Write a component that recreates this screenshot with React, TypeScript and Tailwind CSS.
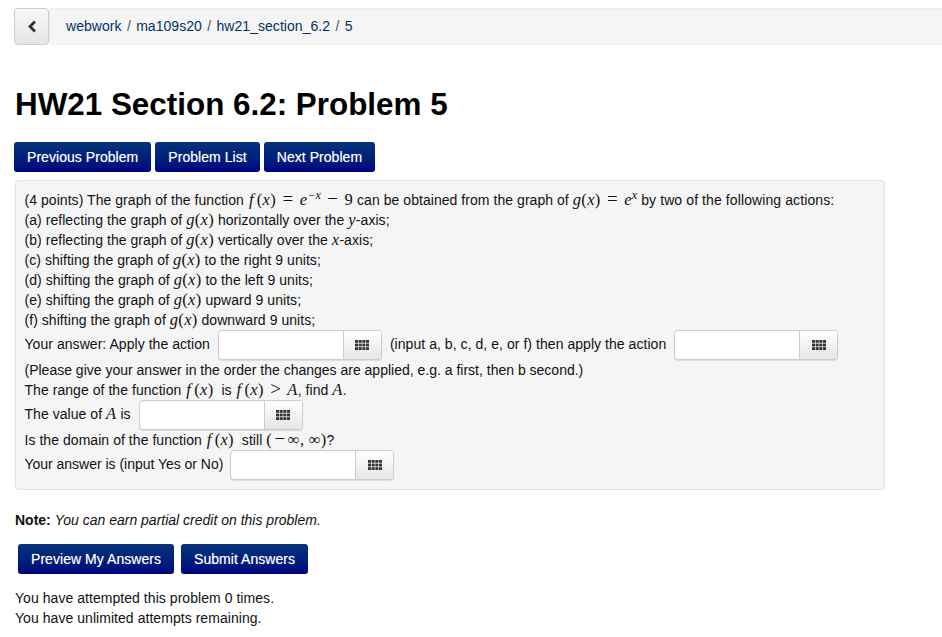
import { ReactNode } from "react";

const sans = "font-['Liberation_Sans',Arial,sans-serif]";

function I({ children }: { children: ReactNode }) {
  return <span className="font-['Liberation_Serif',serif] italic text-[16.5px] tracking-[0.3px]">{children}</span>;
}

function R({ children }: { children: ReactNode }) {
  return <span className="font-['Liberation_Serif',serif] text-[16.5px] tracking-[0.3px]">{children}</span>;
}

// operators come out wider in the math font
function Op({ children }: { children: ReactNode }) {
  return <span className="mx-[2.5px] font-['Liberation_Serif',serif] text-[19px] leading-[0]">{children}</span>;
}

function Fx({ n = "f", tight = false }: { n?: string; tight?: boolean }) {
  return (
    <span className={n === "f" && !tight ? "mr-[4px] whitespace-nowrap" : "whitespace-nowrap"}>
      <span className={n === "f" ? "pl-[1px] pr-[3px]" : ""}>
        <I>{n}</I>
      </span>
      <R>(</R>
      <I>x</I>
      <R>)</R>
    </span>
  );
}

function Sup({ children }: { children: ReactNode }) {
  return <sup className="relative top-[-6px] align-baseline font-['Liberation_Serif',serif] text-[12px] italic leading-[0]">{children}</sup>;
}

function GridIcon() {
  return (
    <svg width="14" height="10" viewBox="0 0 14 10" fill="#333">
      {[0, 1, 2].map((r) =>
        [0, 1, 2, 3].map((c) => <rect key={`${r}-${c}`} x={c * 3.67} y={r * 3.6} width="3" height="2.8" />)
      )}
    </svg>
  );
}

function AnswerBox() {
  return (
    <span className="inline-flex h-[30px] w-[164px] shrink-0 rounded-[4px] border border-[#cccccc] bg-white shadow-[0_1px_1px_rgba(0,0,0,0.1)]">
      <span className="flex-1" />
      <span className="flex w-[38px] items-center justify-center rounded-r-[3px] border-l border-[#cccccc] bg-gradient-to-b from-white to-[#e6e6e6]">
        <GridIcon />
      </span>
    </span>
  );
}

function NavButton({ children }: { children: ReactNode }) {
  return (
    <button className="h-[30px] rounded-[3px] bg-gradient-to-b from-[#0a3278] to-[#00007f] px-[13px] text-[14px] text-white [text-shadow:0_0_1px_rgba(255,255,255,0.45)]">
      {children}
    </button>
  );
}

export default function App() {
  const actions = [
    <>(a) reflecting the graph of <Fx n="g" /> horizontally over the <I>y</I>-axis;</>,
    <>(b) reflecting the graph of <Fx n="g" /> vertically over the <I>x</I>-axis;</>,
    <>(c) shifting the graph of <Fx n="g" /> to the right 9 units;</>,
    <>(d) shifting the graph of <Fx n="g" /> to the left 9 units;</>,
    <>(e) shifting the graph of <Fx n="g" /> upward 9 units;</>,
    <>(f) shifting the graph of <Fx n="g" /> downward 9 units;</>,
  ];

  return (
    <div className={`${sans} h-[637px] w-[942px] overflow-hidden bg-white pl-[14px] pt-[8px] text-[14px] leading-[20px] tracking-[0.05px] text-[#111111]`}>
      <div className="flex h-[37px]">
        <button className="flex h-[37px] w-[35px] items-center justify-center rounded-[4px] border border-[#cccccc] bg-gradient-to-b from-[#f8f8f8] to-[#e6e6e6]">
          <svg width="10" height="13" viewBox="0 0 10 13" fill="none" stroke="#333" strokeWidth="2.8">
            <path d="M8 1.5 L3 6.5 L8 11.5" />
          </svg>
        </button>
        <div className="flex flex-1 items-center rounded-l-[4px] border border-r-0 border-[#eeeeee] bg-[#f5f5f5] pb-[1px] pl-[16px]">
          <span className="text-[#003366]">webwork</span>
          <span className="px-[5.3px] text-[#555555]">/</span>
          <span className="text-[#003366]">ma109s20</span>
          <span className="px-[5.3px] text-[#555555]">/</span>
          <span className="text-[#003366]">hw21_section_6.2</span>
          <span className="px-[5.3px] text-[#555555]">/</span>
          <span className="text-[#003366]">5</span>
        </div>
      </div>

      <h1 className="ml-[1px] mt-[39px] text-[31.4px] font-bold leading-[42px] tracking-normal text-black">HW21 Section 6.2: Problem 5</h1>

      <div className="mt-[16px] flex gap-[4px]">
        <NavButton>Previous Problem</NavButton>
        <NavButton>Problem List</NavButton>
        <NavButton>Next Problem</NavButton>
      </div>

      <div className="ml-[1px] mt-[8px] w-[870px] rounded-[4px] border border-[#e3e3e3] bg-[#f5f5f5] px-[8.5px] py-[9px]">
        <div className="h-[20px] whitespace-nowrap">
          (4 points) The graph of the function <Fx tight /> <Op>=</Op> <I>e</I>
          <Sup>−x</Sup> <Op>−</Op> <R>9</R> can be obtained from the graph of <Fx n="g" /> <Op>=</Op> <I>e</I>
          <Sup>x</Sup> <span className="tracking-[0.1px]">by two of the following actions:</span>
        </div>
        {actions.map((a, i) => (
          <div key={i} className="h-[20px]">{a}</div>
        ))}
        <div className="flex h-[30px] items-center">
          <span className="pb-[2px]">Your answer: Apply the action</span>
          <span className="ml-[8px] flex"><AnswerBox /></span>
          <span className="ml-[8px] pb-[2px]">(input a, b, c, d, e, or f) then apply the action</span>
          <span className="ml-[8px] flex"><AnswerBox /></span>
        </div>
        <div className="tracking-normal">(Please give your answer in the order the changes are applied, e.g. a first, then b second.)</div>
        <div className="h-[20px]">
          The range of the function <Fx /> is <Fx tight /> <Op>&gt;</Op> <I>A</I>, find <I>A</I>.
        </div>
        <div className="flex h-[30px] items-center">
          <span className="pb-[2px]">The value of <I>A</I> is</span>
          <span className="ml-[8px] flex"><AnswerBox /></span>
        </div>
        <div className="h-[20px]">
          Is the domain of the function <Fx /> still <R>(</R><Op>−</Op><R>∞, ∞)</R>?
        </div>
        <div className="flex h-[30px] items-center">
          <span className="pb-[2px] tracking-[-0.02px]">Your answer is (input Yes or No)</span>
          <span className="ml-[7px] flex"><AnswerBox /></span>
        </div>
      </div>

      <p className="ml-[1px] mt-[20px] tracking-normal">
        <b>Note:</b> <i>You can earn partial credit on this problem.</i>
      </p>

      <div className="ml-[4px] mt-[14px] flex gap-[7px]">
        <NavButton>Preview My Answers</NavButton>
        <NavButton>Submit Answers</NavButton>
      </div>

      <div className="ml-[1px] mt-[14px]">
        <div>You have attempted this problem 0 times.</div>
        <div>You have unlimited attempts remaining.</div>
      </div>
    </div>
  );
}
